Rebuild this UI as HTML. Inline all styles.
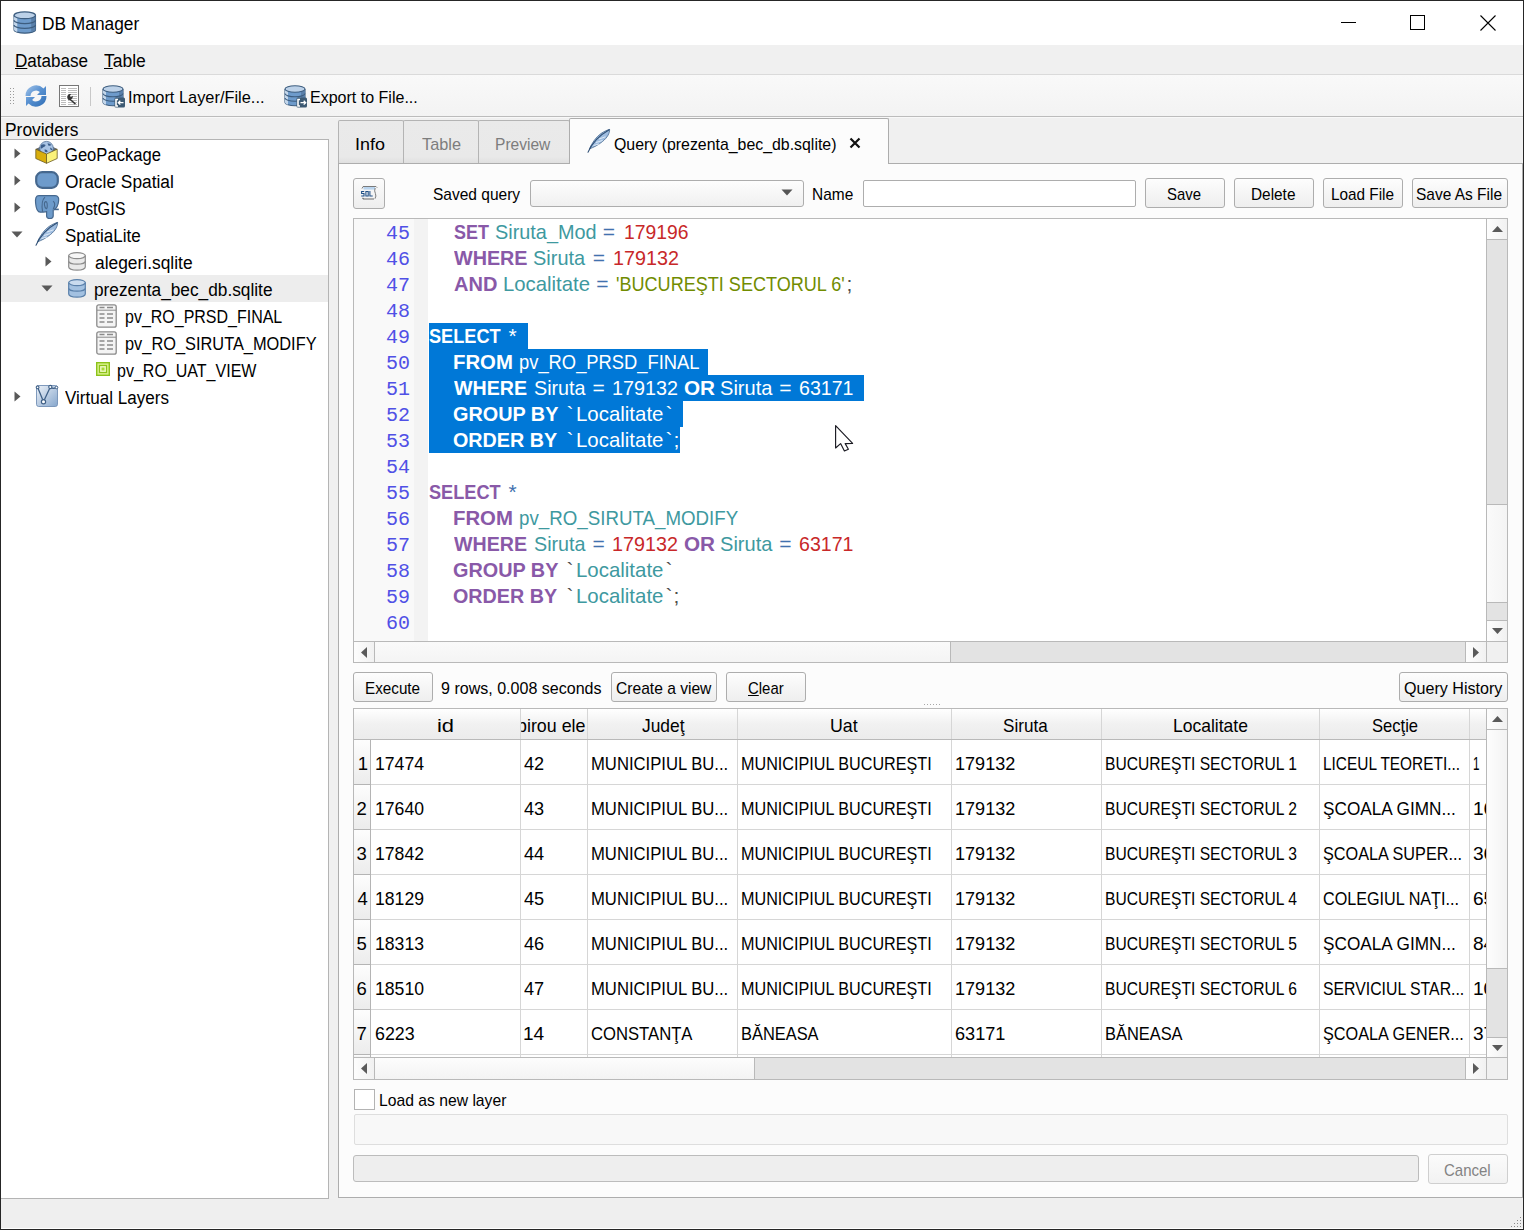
<!DOCTYPE html>
<html><head><meta charset="utf-8">
<style>
*{box-sizing:border-box;margin:0;padding:0}
html,body{width:1524px;height:1230px;overflow:hidden;background:#f0f0f0}
body{position:relative;font-family:"Liberation Sans",sans-serif;font-size:17px;color:#000}
.a{position:absolute}
.t{position:absolute;white-space:pre;line-height:1}
svg{position:absolute;overflow:visible}
.code{position:absolute;white-space:pre;line-height:1;font-size:20px}
.k{font-weight:bold;color:#8959a8}
.i{color:#3e999f}
.o{color:#4271ae}
.n{color:#c82829}
.s{color:#718c00}
.p{color:#4d4d4c}
.sel .k,.sel .i,.sel .o,.sel .n,.sel .s,.sel .p{color:#fff}
.ln{position:absolute;white-space:pre;line-height:1;font-family:"Liberation Mono",monospace;font-size:20px;color:#5050e6;text-align:right;width:60px}
</style></head><body>

<div class="a" style="left:0px;top:0px;width:1524px;height:1230px;background:#f0f0f0"></div>
<div class="a" style="left:1px;top:1px;width:1522px;height:44px;background:#fff"></div>
<div class="t" style="left:41.81px;top:16.00px;font-size:17.5px;transform-origin:0 0;transform:scaleX(0.9897);">DB Manager</div>
<div class="a" style="left:1341px;top:22px;width:15px;height:1px;background:#000"></div>
<div class="a" style="left:1410px;top:15px;width:15px;height:15px;border:1px solid #000"></div>
<svg style="left:1480px;top:15px" width="16" height="16" viewBox="0 0 16 16"><path d="M0.5 0.5 L15.5 15.5 M15.5 0.5 L0.5 15.5" stroke="#000" stroke-width="1.1"/></svg>
<div class="a" style="left:1px;top:45px;width:1522px;height:29px;background:#f0f0f0"></div>
<div class="t" style="left:14.70px;top:52.00px;font-size:18px;transform-origin:0 0;transform:scaleX(0.9481);"><u>D</u>atabase</div>
<div class="t" style="left:103.90px;top:52.00px;font-size:18px;transform-origin:0 0;transform:scaleX(0.9721);"><u>T</u>able</div>
<div class="a" style="left:1px;top:74px;width:1522px;height:1px;background:#dadada"></div>
<div class="a" style="left:1px;top:75px;width:1522px;height:41px;background:linear-gradient(#f9f9f9,#f3f3f3)"></div>
<div class="a" style="left:1px;top:116px;width:1522px;height:1px;background:#bcbcbc"></div>
<div class="a" style="left:1px;top:117px;width:1522px;height:1px;background:#f8f8f8"></div>
<div class="a" style="left:10px;top:88px;width:1px;height:1px;background:#9a9a9a"></div>
<div class="a" style="left:13px;top:88px;width:1px;height:1px;background:#9a9a9a"></div>
<div class="a" style="left:10px;top:91px;width:1px;height:1px;background:#9a9a9a"></div>
<div class="a" style="left:13px;top:91px;width:1px;height:1px;background:#9a9a9a"></div>
<div class="a" style="left:10px;top:94px;width:1px;height:1px;background:#9a9a9a"></div>
<div class="a" style="left:13px;top:94px;width:1px;height:1px;background:#9a9a9a"></div>
<div class="a" style="left:10px;top:97px;width:1px;height:1px;background:#9a9a9a"></div>
<div class="a" style="left:13px;top:97px;width:1px;height:1px;background:#9a9a9a"></div>
<div class="a" style="left:10px;top:100px;width:1px;height:1px;background:#9a9a9a"></div>
<div class="a" style="left:13px;top:100px;width:1px;height:1px;background:#9a9a9a"></div>
<div class="a" style="left:10px;top:103px;width:1px;height:1px;background:#9a9a9a"></div>
<div class="a" style="left:13px;top:103px;width:1px;height:1px;background:#9a9a9a"></div>
<svg style="left:0;top:0" width="60" height="120" viewBox="0 0 60 120">
<defs><linearGradient id="rfg" x1="25" y1="85" x2="46" y2="107" gradientUnits="userSpaceOnUse"><stop offset="0" stop-color="#a9c8ea"/><stop offset=".45" stop-color="#5b93d2"/><stop offset="1" stop-color="#2e6db5"/></linearGradient></defs>
<path d="M25.5 96 A10.5 10.5 0 0 1 43.5 88.5 L46 86 L46 95 L37 95 L39.9 92.1 A5.5 5.5 0 0 0 30.5 96 Z" fill="url(#rfg)"/>
<path d="M46.5 96 A10.5 10.5 0 0 1 28.5 103.5 L26 106 L26 97 L35 97 L32.1 99.9 A5.5 5.5 0 0 0 41.5 96 Z" fill="url(#rfg)"/>
</svg>
<svg style="left:59px;top:85px" width="20" height="22" viewBox="0 0 20 22">
<rect x="0.5" y="0.5" width="19" height="21" fill="#fff" stroke="#777" stroke-width="1"/>
<g stroke="#bdbdbd" stroke-width="1">
<path d="M2 3.5h5 M9 3.5h9 M2 5.5h5 M9 5.5h9 M2 7.5h5 M9 7.5h9 M2 9.5h5 M9 9.5h9 M2 11.5h5 M9 11.5h9 M2 13.5h5 M9 13.5h9 M2 15.5h5 M9 15.5h9 M2 17.5h5 M9 17.5h9 M2 19.5h5 M9 19.5h9"/>
</g>
<path d="M8.5 13.5 C7.5 11 9.5 8.5 12 9.2 L10.8 11 L12 12.2 L13.6 10.8 C14.2 12.6 13.2 14 12 14.2 L17 18.5 L15.8 19.6 L10.8 15 C9.8 15.2 9 14.6 8.5 13.5Z" fill="#333"/>
</svg>
<div class="a" style="left:90px;top:87px;width:1px;height:19px;background:#c8c8c8"></div>
<svg style="left:102px;top:85px" width="24" height="24" viewBox="0 0 24 24"><path d="M1 4 v13.5 a10 3.2 0 0 0 20 0 v-13.5" fill="#6e9bcb" stroke="#3d5d7f" stroke-width="1.1"/>
<path d="M1 4 v13.5 a10 3.2 0 0 0 3 2.2 v-13.5 a10 3.2 0 0 1 -3 -2.2z" fill="#c3d6ea"/>
<path d="M17 6 v13.5 a10 3.2 0 0 0 4 -2 v-13.5 a10 3.2 0 0 1 -4 2z" fill="#5a80aa"/>
<path d="M1 8.6 a10 3.2 0 0 0 20 0 M1 13 a10 3.2 0 0 0 20 0" fill="none" stroke="#3d5d7f" stroke-width="1.1"/>
<ellipse cx="11" cy="4" rx="10" ry="3.2" fill="#bcd1e8" stroke="#3d5d7f" stroke-width="1.1"/><rect x="12.5" y="12.5" width="10.5" height="10" rx="1.5" fill="#3d5a73"/><path d="M16 14.5 h-2 v6.5 h2" stroke="#fff" stroke-width="1.6" fill="none"/><path d="M21.5 17.7 h-5 M18.3 15.8 l-2 1.9 l2 1.9" stroke="#fff" stroke-width="1.3" fill="none"/></svg>
<div class="t" style="left:128.21px;top:90.00px;font-size:16.6px;transform-origin:0 0;transform:scaleX(0.9868);">Import Layer/File...</div>
<svg style="left:284px;top:85px" width="24" height="24" viewBox="0 0 24 24"><path d="M1 4 v13.5 a10 3.2 0 0 0 20 0 v-13.5" fill="#6e9bcb" stroke="#3d5d7f" stroke-width="1.1"/>
<path d="M1 4 v13.5 a10 3.2 0 0 0 3 2.2 v-13.5 a10 3.2 0 0 1 -3 -2.2z" fill="#c3d6ea"/>
<path d="M17 6 v13.5 a10 3.2 0 0 0 4 -2 v-13.5 a10 3.2 0 0 1 -4 2z" fill="#5a80aa"/>
<path d="M1 8.6 a10 3.2 0 0 0 20 0 M1 13 a10 3.2 0 0 0 20 0" fill="none" stroke="#3d5d7f" stroke-width="1.1"/>
<ellipse cx="11" cy="4" rx="10" ry="3.2" fill="#bcd1e8" stroke="#3d5d7f" stroke-width="1.1"/><rect x="12.5" y="12.5" width="10.5" height="10" rx="1.5" fill="#3d5a73"/><path d="M16 14.5 h-2 v6.5 h2" stroke="#fff" stroke-width="1.6" fill="none"/><path d="M16.5 17.7 h5 M19.7 15.8 l2 1.9 l-2 1.9" stroke="#fff" stroke-width="1.3" fill="none"/></svg>
<div class="t" style="left:310.23px;top:90.00px;font-size:16.6px;transform-origin:0 0;transform:scaleX(0.9655);">Export to File...</div>
<svg style="left:12.8px;top:10.8px" width="24" height="24" viewBox="0 0 24 24"><g transform="scale(1.07)"><path d="M1 4 v13.5 a10 3.2 0 0 0 20 0 v-13.5" fill="#6e9bcb" stroke="#3d5d7f" stroke-width="1.1"/>
<path d="M1 4 v13.5 a10 3.2 0 0 0 3 2.2 v-13.5 a10 3.2 0 0 1 -3 -2.2z" fill="#c3d6ea"/>
<path d="M17 6 v13.5 a10 3.2 0 0 0 4 -2 v-13.5 a10 3.2 0 0 1 -4 2z" fill="#5a80aa"/>
<path d="M1 8.6 a10 3.2 0 0 0 20 0 M1 13 a10 3.2 0 0 0 20 0" fill="none" stroke="#3d5d7f" stroke-width="1.1"/>
<ellipse cx="11" cy="4" rx="10" ry="3.2" fill="#bcd1e8" stroke="#3d5d7f" stroke-width="1.1"/></g></svg>
<div class="t" style="left:4.93px;top:121.00px;font-size:18px;transform-origin:0 0;transform:scaleX(0.9653);">Providers</div>
<div class="a" style="left:1px;top:139px;width:328px;height:1060px;background:#fff;border:1px solid #b4b4b4;border-left:none"></div>
<div class="a" style="left:1px;top:275px;width:327px;height:27px;background:#ededed"></div>
<svg style="left:14px;top:147.8px" width="7" height="11" viewBox="0 0 7 11"><path d="M0.5 0.5 L6.5 5.5 L0.5 10.5Z" fill="#595959"/></svg>
<svg style="left:35px;top:141px" width="23" height="23" viewBox="0 0 23 23">
<path d="M1 8.2 L11.5 3.5 L22 8.2 L11.5 13Z" fill="#5f6f7c" stroke="#555" stroke-width="0.7"/>
<circle cx="11.5" cy="7.2" r="6.8" fill="#a9c4e4" stroke="#506f95" stroke-width="0.8"/>
<path d="M6.2 3.8 q2.5 -1.2 4.5 0.3 q-0.5 2 -2.8 2.3 q-1 1.5 -2.4 0.8z M12.5 2.2 q2.5 0 4 1.8 q-1.5 1.2 -3.2 0.4z M9.5 8.5 q2.5 -0.5 3.3 2 q-1.5 1.5 -3 0z M15.2 6.5 q2 0.8 2.3 2.8 q-1.8 0.3 -2.3 -1.5z" fill="#3a5d8a"/>
<path d="M0.8 8.2 L11.5 13 L11.5 22.3 L0.8 17.5Z" fill="#d9ae0c" stroke="#6b5b1f" stroke-width="0.8" stroke-linejoin="round"/>
<path d="M22.2 8.2 L11.5 13 L11.5 22.3 L22.2 17.5Z" fill="#fbf27a" stroke="#6b5b1f" stroke-width="0.8" stroke-linejoin="round"/>
</svg>
<div class="t" style="left:64.58px;top:146.00px;font-size:18px;transform-origin:0 0;transform:scaleX(0.9214);">GeoPackage</div>
<svg style="left:14px;top:174.8px" width="7" height="11" viewBox="0 0 7 11"><path d="M0.5 0.5 L6.5 5.5 L0.5 10.5Z" fill="#595959"/></svg>
<svg style="left:35px;top:171px" width="24" height="18" viewBox="0 0 24 18"><rect x="1.2" y="1.2" width="21.6" height="15.6" rx="6" fill="#6e9bcb" stroke="#46688e" stroke-width="2.2"/></svg>
<div class="t" style="left:64.54px;top:173.00px;font-size:18px;transform-origin:0 0;transform:scaleX(0.9622);">Oracle Spatial</div>
<svg style="left:14px;top:201.8px" width="7" height="11" viewBox="0 0 7 11"><path d="M0.5 0.5 L6.5 5.5 L0.5 10.5Z" fill="#595959"/></svg>
<svg style="left:32px;top:192px" width="30" height="30" viewBox="0 0 30 30">
<path d="M7 3.6 H23 C26.3 3.6 27 6 26.6 9 C26.2 13 25 16 22 17.8 L21.2 18 L21.2 24 C21.2 27.3 14.6 27.3 14.6 24 L14.6 19.6 C12.5 20 10.5 20.2 8.3 20.2 C5 20.2 4 16 3.6 11 C3.2 6 4 3.6 7 3.6Z" fill="#6d9bcb" stroke="#46688e" stroke-width="1.2"/>
<path d="M10.6 19.8 C9.6 14 9.8 8 13 5.2" fill="none" stroke="#46688e" stroke-width="1.1"/>
<path d="M14.6 17 C12 15.5 11.8 10 13.6 9.6 C15.2 9.4 15.6 12.5 15 16.5" fill="none" stroke="#46688e" stroke-width="1.1"/>
<path d="M21.2 17 C23.3 14 23.2 10 21 9.2" fill="none" stroke="#46688e" stroke-width="1.1"/>
<path d="M22 17.4 H26.8" stroke="#46688e" stroke-width="1.6"/>
</svg>
<div class="t" style="left:64.60px;top:200.00px;font-size:18px;transform-origin:0 0;transform:scaleX(0.9030);">PostGIS</div>
<svg style="left:11px;top:231px" width="12" height="7" viewBox="0 0 12 7"><path d="M0.5 0.5 L11.5 0.5 L6 6.5Z" fill="#595959"/></svg>
<svg style="left:35px;top:222px" width="23" height="24" viewBox="0 0 23 24"><path d="M2.5 19.8 C5 14 9 8 14 4.5 C17 2.5 20 1 22.6 0.4 C22.8 4 20.5 8.5 15.5 12.5 C11.5 15.8 6.5 18.5 2.5 19.8 Z" fill="#9fbde0" stroke="#46688e" stroke-width="0.8"/>
<path d="M9 13.5 l6.5 -2 M12 10 l6.5 -2.2 M6.5 16.5 l5.5 -1.5" stroke="#e4eef8" stroke-width="0.9"/>
<path d="M0.8 23.6 C4 16 9 8 22.6 0.4" fill="none" stroke="#2f4f75" stroke-width="1.1"/></svg>
<div class="t" style="left:64.55px;top:227.00px;font-size:18px;transform-origin:0 0;transform:scaleX(0.9456);">SpatiaLite</div>
<svg style="left:45px;top:255.8px" width="7" height="11" viewBox="0 0 7 11"><path d="M0.5 0.5 L6.5 5.5 L0.5 10.5Z" fill="#595959"/></svg>
<svg style="left:68px;top:251.5px" width="18" height="19" viewBox="0 0 18 19">
<path d="M0.7 3.6 v11.5 a8.3 3 0 0 0 16.6 0 v-11.5" fill="#e9e9e9" stroke="#8c8c8c" stroke-width="1.2"/>
<path d="M0.7 9.2 a8.3 3 0 0 0 16.6 0" fill="none" stroke="#8c8c8c" stroke-width="1.2"/>
<ellipse cx="9" cy="3.6" rx="8.3" ry="3" fill="#f7f7f7" stroke="#8c8c8c" stroke-width="1.2"/></svg>
<div class="t" style="left:95.30px;top:254.00px;font-size:18px;transform-origin:0 0;transform:scaleX(0.9653);">alegeri.sqlite</div>
<svg style="left:41px;top:285px" width="12" height="7" viewBox="0 0 12 7"><path d="M0.5 0.5 L11.5 0.5 L6 6.5Z" fill="#595959"/></svg>
<svg style="left:68px;top:278.5px" width="18" height="19" viewBox="0 0 18 19">
<path d="M0.7 3.6 v11.5 a8.3 3 0 0 0 16.6 0 v-11.5" fill="#a3c1e1" stroke="#5a80aa" stroke-width="1.2"/>
<path d="M0.7 9.2 a8.3 3 0 0 0 16.6 0" fill="none" stroke="#5a80aa" stroke-width="1.2"/>
<ellipse cx="9" cy="3.6" rx="8.3" ry="3" fill="#c9dbef" stroke="#5a80aa" stroke-width="1.2"/></svg>
<div class="t" style="left:94.34px;top:281.00px;font-size:18px;transform-origin:0 0;transform:scaleX(0.9589);">prezenta_bec_db.sqlite</div>
<svg style="left:96px;top:303.5px" width="21" height="24" viewBox="0 0 21 24">
<rect x="0.8" y="0.8" width="19.4" height="22.4" rx="2" fill="#f4f4f4" stroke="#8a8a8a" stroke-width="1.3"/>
<path d="M1 6.2h19" stroke="#8a8a8a" stroke-width="1"/>
<path d="M3.5 3.5h5 M11 3.5h6 M3.5 10h5 M11 10h6 M3.5 14h5 M11 14h6 M3.5 18h5 M11 18h6" stroke="#8a8a8a" stroke-width="1.4"/>
</svg>
<div class="t" style="left:124.61px;top:308.00px;font-size:18px;transform-origin:0 0;transform:scaleX(0.8881);">pv_RO_PRSD_FINAL</div>
<svg style="left:96px;top:330.5px" width="21" height="24" viewBox="0 0 21 24">
<rect x="0.8" y="0.8" width="19.4" height="22.4" rx="2" fill="#f4f4f4" stroke="#8a8a8a" stroke-width="1.3"/>
<path d="M1 6.2h19" stroke="#8a8a8a" stroke-width="1"/>
<path d="M3.5 3.5h5 M11 3.5h6 M3.5 10h5 M11 10h6 M3.5 14h5 M11 14h6 M3.5 18h5 M11 18h6" stroke="#8a8a8a" stroke-width="1.4"/>
</svg>
<div class="t" style="left:124.59px;top:335.00px;font-size:18px;transform-origin:0 0;transform:scaleX(0.9091);">pv_RO_SIRUTA_MODIFY</div>
<svg style="left:96px;top:362px" width="14" height="14" viewBox="0 0 14 14">
<rect x="0.7" y="0.7" width="12.6" height="12.6" fill="#d8f08a" stroke="#8cc21a" stroke-width="1.4"/>
<rect x="3.5" y="3.5" width="7" height="7" fill="#f0fac8" stroke="#8cc21a" stroke-width="1.2"/>
<rect x="5.5" y="5.5" width="3" height="3" fill="#a8d838"/></svg>
<div class="t" style="left:116.81px;top:362.00px;font-size:18px;transform-origin:0 0;transform:scaleX(0.8897);">pv_RO_UAT_VIEW</div>
<svg style="left:14px;top:390.8px" width="7" height="11" viewBox="0 0 7 11"><path d="M0.5 0.5 L6.5 5.5 L0.5 10.5Z" fill="#595959"/></svg>
<svg style="left:36px;top:385px" width="22" height="22" viewBox="0 0 22 22">
<defs><linearGradient id="vlg" x1="0" y1="0" x2="1" y2="1"><stop offset="0" stop-color="#eef3f9"/><stop offset="1" stop-color="#86a6cc"/></linearGradient></defs>
<rect x="0.5" y="0.5" width="21" height="21" rx="2.2" fill="url(#vlg)" stroke="#7390b5" stroke-width="0.9"/>
<path d="M1.6 2.3 L7.5 16.7 L14.3 2 Q17 4.5 20.5 2.5" fill="none" stroke="#3e5f86" stroke-width="1.3"/>
<circle cx="7.5" cy="16.7" r="2.1" fill="#fff" stroke="#3e5f86" stroke-width="1.2"/>
<circle cx="14.3" cy="2" r="1.6" fill="#fff" stroke="#3e5f86" stroke-width="1.1"/>
<circle cx="1.6" cy="2.3" r="1.4" fill="#fff" stroke="#3e5f86" stroke-width="1.1"/>
<circle cx="20.5" cy="2.5" r="1.3" fill="#fff" stroke="#3e5f86" stroke-width="1"/>
</svg>
<div class="t" style="left:65.00px;top:389.00px;font-size:18px;transform-origin:0 0;transform:scaleX(0.9477);">Virtual Layers</div>
<div class="a" style="left:338px;top:163px;width:1185px;height:1035px;background:#fcfcfc;border:1px solid #adadad"></div>
<div class="a" style="left:338px;top:120px;width:66px;height:43px;background:linear-gradient(#eaeaea,#e9e9e9 85%,#e0e0e0);border:1px solid #b4b4b4;border-bottom:none;border-radius:2px 2px 0 0"></div>
<div class="a" style="left:403px;top:120px;width:76px;height:43px;background:linear-gradient(#eaeaea,#e9e9e9 85%,#e0e0e0);border:1px solid #b4b4b4;border-bottom:none;border-radius:2px 2px 0 0"></div>
<div class="a" style="left:478px;top:120px;width:92px;height:43px;background:linear-gradient(#eaeaea,#e9e9e9 85%,#e0e0e0);border:1px solid #b4b4b4;border-bottom:none;border-radius:2px 2px 0 0"></div>
<div class="a" style="left:569px;top:118px;width:320px;height:46px;background:#fcfcfc;border:1px solid #adadad;border-bottom:none;border-radius:2px 2px 0 0"></div>
<div class="t" style="left:355.14px;top:136.00px;font-size:17px;transform-origin:0 0;transform:scaleX(1.0556);">Info</div>
<div class="t" style="left:421.50px;top:136.00px;font-size:17px;transform-origin:0 0;transform:scaleX(0.9600);color:#7d7d7d">Table</div>
<div class="t" style="left:495.19px;top:136.00px;font-size:17px;transform-origin:0 0;transform:scaleX(0.9150);color:#7d7d7d">Preview</div>
<svg style="left:587px;top:129px" width="23" height="24" viewBox="0 0 23 24"><path d="M2.5 19.8 C5 14 9 8 14 4.5 C17 2.5 20 1 22.6 0.4 C22.8 4 20.5 8.5 15.5 12.5 C11.5 15.8 6.5 18.5 2.5 19.8 Z" fill="#9fbde0" stroke="#46688e" stroke-width="0.8"/>
<path d="M9 13.5 l6.5 -2 M12 10 l6.5 -2.2 M6.5 16.5 l5.5 -1.5" stroke="#e4eef8" stroke-width="0.9"/>
<path d="M0.8 23.6 C4 16 9 8 22.6 0.4" fill="none" stroke="#2f4f75" stroke-width="1.1"/></svg>
<div class="t" style="left:614.47px;top:136.00px;font-size:17px;transform-origin:0 0;transform:scaleX(0.9342);">Query (prezenta_bec_db.sqlite)</div>
<svg style="left:849px;top:137px" width="12" height="12" viewBox="0 0 12 12"><path d="M1.5 1.5 L10.5 10.5 M10.5 1.5 L1.5 10.5" stroke="#111" stroke-width="2.2"/></svg>
<div class="a" style="left:353px;top:178px;width:32px;height:31px;border:1px solid #adadad;border-radius:3px;background:linear-gradient(#fbfbfb,#eeeeee)"></div>
<svg style="left:350px;top:175px" width="40" height="37" viewBox="350 175 40 37">
<path d="M363 186.5 h13 l1.2 1.2 M362 188.5 l1.2 -2" fill="none" stroke="#7a7a7a" stroke-width="1"/>
<rect x="363.5" y="187" width="11.5" height="2.6" fill="#b9d4ee"/>
<path d="M375.2 188 q-1.2 3 0.2 5.5 q1.2 2.5 -0.4 5.2" fill="none" stroke="#6f6f6f" stroke-width="0.9"/>
<path d="M362.5 197.8 l1 1.2 h10.5" fill="none" stroke="#6a6a6a" stroke-width="1.2"/>
<g fill="none" stroke="#1f4f86" stroke-width="1.05">
<path d="M364.2 191.5 h-2.6 v2 h2.4 v2.5 h-2.8"/>
<path d="M365.9 191.5 h2.3 v4.5 h-2.3 z M367.5 195.5 l0.9 1"/>
<path d="M369.9 191 v5 h2.8"/>
</g></svg>
<div class="t" style="left:433.09px;top:186.00px;font-size:17px;transform-origin:0 0;transform:scaleX(0.9126);">Saved query</div>
<div class="a" style="left:530px;top:180px;width:274px;height:27px;border:1px solid #adadad;border-radius:3px;background:linear-gradient(#fdfdfd,#f0f0f0)"></div>
<svg style="left:781px;top:189px" width="12" height="7" viewBox="0 0 12 7"><path d="M0.5 0.5 L11.5 0.5 L6 6.5Z" fill="#555"/></svg>
<div class="t" style="left:812.49px;top:186.00px;font-size:17px;transform-origin:0 0;transform:scaleX(0.9091);">Name</div>
<div class="a" style="left:863px;top:180px;width:273px;height:27px;border:1px solid #adadad;border-radius:2px;background:#fff"></div>
<div class="a" style="left:1145px;top:178px;width:80px;height:30px;border:1px solid #adadad;border-radius:3px;background:linear-gradient(#fdfdfd,#eeeeee);"></div>
<div class="t" style="left:885.0px;width:600px;text-align:center;top:187.00px;font-size:16.9px;"></div>
<div class="t" style="left:1167.12px;top:186.00px;font-size:17px;transform-origin:0 0;transform:scaleX(0.8784);">Save</div>
<div class="a" style="left:1234px;top:178px;width:80px;height:30px;border:1px solid #adadad;border-radius:3px;background:linear-gradient(#fdfdfd,#eeeeee);"></div>
<div class="t" style="left:974.0px;width:600px;text-align:center;top:187.00px;font-size:16.9px;"></div>
<div class="t" style="left:1251.40px;top:186.00px;font-size:17px;transform-origin:0 0;transform:scaleX(0.9042);">Delete</div>
<div class="a" style="left:1323px;top:178px;width:80px;height:30px;border:1px solid #adadad;border-radius:3px;background:linear-gradient(#fdfdfd,#eeeeee);"></div>
<div class="t" style="left:1063.0px;width:600px;text-align:center;top:187.00px;font-size:16.9px;"></div>
<div class="t" style="left:1330.70px;top:186.00px;font-size:17px;transform-origin:0 0;transform:scaleX(0.9014);">Load File</div>
<div class="a" style="left:1412px;top:178px;width:96px;height:30px;border:1px solid #adadad;border-radius:3px;background:linear-gradient(#fdfdfd,#eeeeee);"></div>
<div class="t" style="left:1160.0px;width:600px;text-align:center;top:187.00px;font-size:16.9px;"></div>
<div class="t" style="left:1416.09px;top:186.00px;font-size:17px;transform-origin:0 0;transform:scaleX(0.9108);">Save As File</div>
<div class="a" style="left:353px;top:218px;width:1155px;height:445px;background:#fff;border:1px solid #b9b9b9"></div>
<div class="a" style="left:354px;top:219px;width:60px;height:422px;background:#f9f9f9"></div>
<div class="a" style="left:414px;top:219px;width:14px;height:422px;background:#f3f3f3"></div>
<div class="ln" style="left:350px;top:224.00px">45</div>
<div class="t" style="left:453.50px;top:221.00px;font-size:21px;transform-origin:0 0;transform:scaleX(0.8537);font-weight:bold;color:#8959a8">SET</div>
<div class="t" style="left:494.95px;top:221.00px;font-size:21px;transform-origin:0 0;transform:scaleX(0.9457);color:#3e999f">Siruta_Mod</div>
<div class="t" style="left:602.70px;top:221.00px;font-size:21px;transform-origin:0 0;transform:scaleX(1.0000);color:#4271ae">=</div>
<div class="t" style="left:623.88px;top:221.00px;font-size:21px;transform-origin:0 0;transform:scaleX(0.9203);color:#c82829">179196</div>
<div class="ln" style="left:350px;top:250.00px">46</div>
<div class="t" style="left:453.50px;top:247.00px;font-size:21px;transform-origin:0 0;transform:scaleX(0.9410);font-weight:bold;color:#8959a8">WHERE</div>
<div class="t" style="left:533.05px;top:247.00px;font-size:21px;transform-origin:0 0;transform:scaleX(0.9500);color:#3e999f">Siruta</div>
<div class="t" style="left:592.80px;top:247.00px;font-size:21px;transform-origin:0 0;transform:scaleX(1.0000);color:#4271ae">=</div>
<div class="t" style="left:612.56px;top:247.00px;font-size:21px;transform-origin:0 0;transform:scaleX(0.9406);color:#c82829">179132</div>
<div class="ln" style="left:350px;top:276.00px">47</div>
<div class="t" style="left:453.50px;top:273.00px;font-size:21px;transform-origin:0 0;transform:scaleX(0.9533);font-weight:bold;color:#8959a8">AND</div>
<div class="t" style="left:503.33px;top:273.00px;font-size:21px;transform-origin:0 0;transform:scaleX(0.9682);color:#3e999f">Localitate</div>
<div class="t" style="left:596.20px;top:273.00px;font-size:21px;transform-origin:0 0;transform:scaleX(1.0000);color:#4271ae">=</div>
<div class="t" style="left:615.54px;top:273.00px;font-size:21px;transform-origin:0 0;transform:scaleX(0.8602);color:#718c00">'BUCUREŞTI SECTORUL 6'</div>
<div class="t" style="left:846.50px;top:273.00px;font-size:21px;transform-origin:0 0;transform:scaleX(1.0000);color:#4d4d4c">;</div>
<div class="ln" style="left:350px;top:302.00px">48</div>
<div class="a" style="left:429px;top:323px;width:99px;height:26px;background:#0078d7"></div>
<div class="ln" style="left:350px;top:328.00px">49</div>
<div class="t" style="left:429.40px;top:325.00px;font-size:21px;transform-origin:0 0;transform:scaleX(0.8651);font-weight:bold;color:#fff">SELECT</div>
<div class="t" style="left:508.60px;top:325.00px;font-size:21px;transform-origin:0 0;transform:scaleX(1.0000);color:#fff">*</div>
<div class="a" style="left:429px;top:349px;width:279px;height:26px;background:#0078d7"></div>
<div class="ln" style="left:350px;top:354.00px">50</div>
<div class="t" style="left:453.03px;top:351.00px;font-size:21px;transform-origin:0 0;transform:scaleX(0.9683);font-weight:bold;color:#fff">FROM</div>
<div class="t" style="left:518.93px;top:351.00px;font-size:21px;transform-origin:0 0;transform:scaleX(0.8741);color:#fff">pv_RO_PRSD_FINAL</div>
<div class="a" style="left:429px;top:375px;width:435px;height:26px;background:#0078d7"></div>
<div class="ln" style="left:350px;top:380.00px">51</div>
<div class="t" style="left:454.00px;top:377.00px;font-size:21px;transform-origin:0 0;transform:scaleX(0.9346);font-weight:bold;color:#fff">WHERE</div>
<div class="t" style="left:533.66px;top:377.00px;font-size:21px;transform-origin:0 0;transform:scaleX(0.9389);color:#fff">Siruta</div>
<div class="t" style="left:592.60px;top:377.00px;font-size:21px;transform-origin:0 0;transform:scaleX(1.0000);color:#fff">=</div>
<div class="t" style="left:612.46px;top:377.00px;font-size:21px;transform-origin:0 0;transform:scaleX(0.9406);color:#fff">179132</div>
<div class="t" style="left:684.11px;top:377.00px;font-size:21px;transform-origin:0 0;transform:scaleX(0.9867);font-weight:bold;color:#fff">OR</div>
<div class="t" style="left:720.24px;top:377.00px;font-size:21px;transform-origin:0 0;transform:scaleX(0.9556);color:#fff">Siruta</div>
<div class="t" style="left:779.20px;top:377.00px;font-size:21px;transform-origin:0 0;transform:scaleX(1.0000);color:#fff">=</div>
<div class="t" style="left:799.37px;top:377.00px;font-size:21px;transform-origin:0 0;transform:scaleX(0.9316);color:#fff">63171</div>
<div class="a" style="left:429px;top:401px;width:254px;height:26px;background:#0078d7"></div>
<div class="ln" style="left:350px;top:406.00px">52</div>
<div class="t" style="left:453.06px;top:403.00px;font-size:21px;transform-origin:0 0;transform:scaleX(0.9441);font-weight:bold;color:#fff">GROUP BY</div>
<div class="t" style="left:566.60px;top:403.00px;font-size:21px;transform-origin:0 0;transform:scaleX(1.0000);color:#fff">`</div>
<div class="t" style="left:575.53px;top:403.00px;font-size:21px;transform-origin:0 0;transform:scaleX(0.9727);color:#fff">Localitate</div>
<div class="t" style="left:665.50px;top:403.00px;font-size:21px;transform-origin:0 0;transform:scaleX(1.0000);color:#fff">`</div>
<div class="a" style="left:429px;top:427px;width:251px;height:26px;background:#0078d7"></div>
<div class="ln" style="left:350px;top:432.00px">53</div>
<div class="t" style="left:453.06px;top:429.00px;font-size:21px;transform-origin:0 0;transform:scaleX(0.9391);font-weight:bold;color:#fff">ORDER BY</div>
<div class="t" style="left:566.60px;top:429.00px;font-size:21px;transform-origin:0 0;transform:scaleX(1.0000);color:#fff">`</div>
<div class="t" style="left:575.53px;top:429.00px;font-size:21px;transform-origin:0 0;transform:scaleX(0.9727);color:#fff">Localitate</div>
<div class="t" style="left:665.50px;top:429.00px;font-size:21px;transform-origin:0 0;transform:scaleX(1.0000);color:#fff">`</div>
<div class="t" style="left:673.40px;top:429.00px;font-size:21px;transform-origin:0 0;transform:scaleX(1.0000);color:#fff">;</div>
<div class="ln" style="left:350px;top:458.00px">54</div>
<div class="ln" style="left:350px;top:484.00px">55</div>
<div class="t" style="left:429.40px;top:481.00px;font-size:21px;transform-origin:0 0;transform:scaleX(0.8651);font-weight:bold;color:#8959a8">SELECT</div>
<div class="t" style="left:508.60px;top:481.00px;font-size:21px;transform-origin:0 0;transform:scaleX(1.0000);color:#4271ae">*</div>
<div class="ln" style="left:350px;top:510.00px">56</div>
<div class="t" style="left:453.03px;top:507.00px;font-size:21px;transform-origin:0 0;transform:scaleX(0.9683);font-weight:bold;color:#8959a8">FROM</div>
<div class="t" style="left:518.91px;top:507.00px;font-size:21px;transform-origin:0 0;transform:scaleX(0.8918);color:#3e999f">pv_RO_SIRUTA_MODIFY</div>
<div class="ln" style="left:350px;top:536.00px">57</div>
<div class="t" style="left:454.00px;top:533.00px;font-size:21px;transform-origin:0 0;transform:scaleX(0.9346);font-weight:bold;color:#8959a8">WHERE</div>
<div class="t" style="left:533.66px;top:533.00px;font-size:21px;transform-origin:0 0;transform:scaleX(0.9389);color:#3e999f">Siruta</div>
<div class="t" style="left:592.60px;top:533.00px;font-size:21px;transform-origin:0 0;transform:scaleX(1.0000);color:#4271ae">=</div>
<div class="t" style="left:612.46px;top:533.00px;font-size:21px;transform-origin:0 0;transform:scaleX(0.9406);color:#c82829">179132</div>
<div class="t" style="left:684.11px;top:533.00px;font-size:21px;transform-origin:0 0;transform:scaleX(0.9867);font-weight:bold;color:#8959a8">OR</div>
<div class="t" style="left:720.24px;top:533.00px;font-size:21px;transform-origin:0 0;transform:scaleX(0.9556);color:#3e999f">Siruta</div>
<div class="t" style="left:779.20px;top:533.00px;font-size:21px;transform-origin:0 0;transform:scaleX(1.0000);color:#4271ae">=</div>
<div class="t" style="left:799.37px;top:533.00px;font-size:21px;transform-origin:0 0;transform:scaleX(0.9316);color:#c82829">63171</div>
<div class="ln" style="left:350px;top:562.00px">58</div>
<div class="t" style="left:453.06px;top:559.00px;font-size:21px;transform-origin:0 0;transform:scaleX(0.9441);font-weight:bold;color:#8959a8">GROUP BY</div>
<div class="t" style="left:566.60px;top:559.00px;font-size:21px;transform-origin:0 0;transform:scaleX(1.0000);color:#4d4d4c">`</div>
<div class="t" style="left:575.53px;top:559.00px;font-size:21px;transform-origin:0 0;transform:scaleX(0.9727);color:#3e999f">Localitate</div>
<div class="t" style="left:665.50px;top:559.00px;font-size:21px;transform-origin:0 0;transform:scaleX(1.0000);color:#4d4d4c">`</div>
<div class="ln" style="left:350px;top:588.00px">59</div>
<div class="t" style="left:453.06px;top:585.00px;font-size:21px;transform-origin:0 0;transform:scaleX(0.9391);font-weight:bold;color:#8959a8">ORDER BY</div>
<div class="t" style="left:566.60px;top:585.00px;font-size:21px;transform-origin:0 0;transform:scaleX(1.0000);color:#4d4d4c">`</div>
<div class="t" style="left:575.53px;top:585.00px;font-size:21px;transform-origin:0 0;transform:scaleX(0.9727);color:#3e999f">Localitate</div>
<div class="t" style="left:665.50px;top:585.00px;font-size:21px;transform-origin:0 0;transform:scaleX(1.0000);color:#4d4d4c">`</div>
<div class="t" style="left:673.40px;top:585.00px;font-size:21px;transform-origin:0 0;transform:scaleX(1.0000);color:#4d4d4c">;</div>
<div class="ln" style="left:350px;top:614.00px">60</div>
<svg style="left:820px;top:415px" width="40" height="45" viewBox="820 415 40 45">
<path d="M835.6 425.6 L835.6 448 L840.6 443.6 L844.4 451 L848.4 449.2 L845.2 443.6 L852.6 443.4 Z" fill="#fff" stroke="#1a1a22" stroke-width="1.15" stroke-linejoin="round"/></svg>
<div class="a" style="left:1486px;top:218px;width:22px;height:424px;background:linear-gradient(90deg,#fafafa,#f4f4f4);border:1px solid #b9b9b9"></div>
<div class="a" style="left:1486px;top:218px;width:22px;height:22px;background:linear-gradient(90deg,#fdfdfd,#f1f1f1);border:1px solid #b9b9b9"></div>
<svg style="left:1491.5px;top:226.0px" width="11" height="6" viewBox="0 0 11 6"><path d="M0 6 L5.5 0 L11 6Z" fill="#5a5a5a"/></svg>
<div class="a" style="left:1486px;top:239px;width:22px;height:266px;background:#e3e3e3;border:1px solid #b9b9b9"></div>
<div class="a" style="left:1486px;top:602px;width:22px;height:19px;background:#e3e3e3;border:1px solid #b9b9b9"></div>
<div class="a" style="left:1486px;top:620px;width:22px;height:22px;background:linear-gradient(90deg,#fdfdfd,#f1f1f1);border:1px solid #b9b9b9"></div>
<svg style="left:1491.5px;top:628.0px" width="11" height="6" viewBox="0 0 11 6"><path d="M0 0 L5.5 6 L11 0Z" fill="#5a5a5a"/></svg>
<div class="a" style="left:353px;top:641px;width:1134px;height:22px;background:linear-gradient(#fafafa,#f4f4f4);border:1px solid #b9b9b9"></div>
<div class="a" style="left:353px;top:641px;width:22px;height:22px;background:linear-gradient(90deg,#fdfdfd,#f1f1f1);border:1px solid #b9b9b9"></div>
<svg style="left:361.0px;top:646.5px" width="6" height="11" viewBox="0 0 6 11"><path d="M6 0 L0 5.5 L6 11Z" fill="#5a5a5a"/></svg>
<div class="a" style="left:950px;top:641px;width:516px;height:22px;background:#e3e3e3;border:1px solid #b9b9b9"></div>
<div class="a" style="left:1465px;top:641px;width:22px;height:22px;background:linear-gradient(90deg,#fdfdfd,#f1f1f1);border:1px solid #b9b9b9"></div>
<svg style="left:1473.0px;top:646.5px" width="6" height="11" viewBox="0 0 6 11"><path d="M0 0 L6 5.5 L0 11Z" fill="#5a5a5a"/></svg>
<div class="a" style="left:1486px;top:641px;width:22px;height:22px;background:#f0f0f0;border:1px solid #b9b9b9"></div>
<div class="a" style="left:353px;top:672px;width:80px;height:30px;border:1px solid #adadad;border-radius:3px;background:linear-gradient(#fdfdfd,#eeeeee);"></div>
<div class="t" style="left:93.0px;width:600px;text-align:center;top:680.00px;font-size:16.9px;"></div>
<div class="t" style="left:365.10px;top:680.00px;font-size:17px;transform-origin:0 0;transform:scaleX(0.8967);">Execute</div>
<div class="t" style="left:441.06px;top:680.00px;font-size:17px;transform-origin:0 0;transform:scaleX(0.9438);">9 rows, 0.008 seconds</div>
<div class="a" style="left:611px;top:672px;width:106px;height:30px;border:1px solid #adadad;border-radius:3px;background:linear-gradient(#fdfdfd,#eeeeee);"></div>
<div class="t" style="left:364.0px;width:600px;text-align:center;top:680.00px;font-size:16.9px;"></div>
<div class="t" style="left:615.58px;top:680.00px;font-size:17px;transform-origin:0 0;transform:scaleX(0.9175);">Create a view</div>
<div class="a" style="left:726px;top:672px;width:80px;height:30px;border:1px solid #adadad;border-radius:3px;background:linear-gradient(#fdfdfd,#eeeeee);"></div>
<div class="t" style="left:466.0px;width:600px;text-align:center;top:680.00px;font-size:16.9px;"></div>
<div class="t" style="left:748.00px;top:680.00px;font-size:17px;transform-origin:0 0;transform:scaleX(0.8780);"><u>C</u>lear</div>
<div class="a" style="left:1399px;top:672px;width:109px;height:30px;border:1px solid #adadad;border-radius:3px;background:linear-gradient(#fdfdfd,#eeeeee);"></div>
<div class="t" style="left:1153.5px;width:600px;text-align:center;top:680.00px;font-size:16.9px;"></div>
<div class="t" style="left:1403.55px;top:680.00px;font-size:17px;transform-origin:0 0;transform:scaleX(0.9466);">Query History</div>
<div class="a" style="left:924px;top:704px;width:1px;height:1px;background:#a8a8a8"></div>
<div class="a" style="left:927px;top:704px;width:1px;height:1px;background:#a8a8a8"></div>
<div class="a" style="left:930px;top:704px;width:1px;height:1px;background:#a8a8a8"></div>
<div class="a" style="left:933px;top:704px;width:1px;height:1px;background:#a8a8a8"></div>
<div class="a" style="left:936px;top:704px;width:1px;height:1px;background:#a8a8a8"></div>
<div class="a" style="left:939px;top:704px;width:1px;height:1px;background:#a8a8a8"></div>
<div class="a" style="left:353px;top:708px;width:1155px;height:372px;background:#fff;border:1px solid #b9b9b9"></div>
<div class="a" style="left:354px;top:709px;width:1132px;height:30px;background:linear-gradient(#ffffff,#f1f1f1 50%,#ececec)"></div>
<div class="a" style="left:354px;top:739px;width:1132px;height:1px;background:#b9b9b9"></div>
<div class="a" style="left:520px;top:709px;width:1px;height:30px;background:#d6d6d6"></div>
<div class="a" style="left:587px;top:709px;width:1px;height:30px;background:#d6d6d6"></div>
<div class="a" style="left:737px;top:709px;width:1px;height:30px;background:#d6d6d6"></div>
<div class="a" style="left:951px;top:709px;width:1px;height:30px;background:#d6d6d6"></div>
<div class="a" style="left:1101px;top:709px;width:1px;height:30px;background:#d6d6d6"></div>
<div class="a" style="left:1319px;top:709px;width:1px;height:30px;background:#d6d6d6"></div>
<div class="a" style="left:1469px;top:709px;width:1px;height:30px;background:#d6d6d6"></div>
<div class="a" style="left:354px;top:740px;width:16px;height:44px;background:linear-gradient(#fdfdfd,#ececec)"></div>
<div class="a" style="left:354px;top:785px;width:16px;height:44px;background:linear-gradient(#fdfdfd,#ececec)"></div>
<div class="a" style="left:354px;top:830px;width:16px;height:44px;background:linear-gradient(#fdfdfd,#ececec)"></div>
<div class="a" style="left:354px;top:875px;width:16px;height:44px;background:linear-gradient(#fdfdfd,#ececec)"></div>
<div class="a" style="left:354px;top:920px;width:16px;height:44px;background:linear-gradient(#fdfdfd,#ececec)"></div>
<div class="a" style="left:354px;top:965px;width:16px;height:44px;background:linear-gradient(#fdfdfd,#ececec)"></div>
<div class="a" style="left:354px;top:1010px;width:16px;height:44px;background:linear-gradient(#fdfdfd,#ececec)"></div>
<div class="a" style="left:354px;top:1055px;width:16px;height:3px;background:linear-gradient(#fdfdfd,#ececec)"></div>
<div class="a" style="left:370px;top:740px;width:1px;height:318px;background:#b4b4b4"></div>
<div class="a" style="left:354px;top:784px;width:16px;height:1px;background:#b4b4b4"></div>
<div class="a" style="left:371px;top:784px;width:1115px;height:1px;background:#d6d6d6"></div>
<div class="a" style="left:354px;top:829px;width:16px;height:1px;background:#b4b4b4"></div>
<div class="a" style="left:371px;top:829px;width:1115px;height:1px;background:#d6d6d6"></div>
<div class="a" style="left:354px;top:874px;width:16px;height:1px;background:#b4b4b4"></div>
<div class="a" style="left:371px;top:874px;width:1115px;height:1px;background:#d6d6d6"></div>
<div class="a" style="left:354px;top:919px;width:16px;height:1px;background:#b4b4b4"></div>
<div class="a" style="left:371px;top:919px;width:1115px;height:1px;background:#d6d6d6"></div>
<div class="a" style="left:354px;top:964px;width:16px;height:1px;background:#b4b4b4"></div>
<div class="a" style="left:371px;top:964px;width:1115px;height:1px;background:#d6d6d6"></div>
<div class="a" style="left:354px;top:1009px;width:16px;height:1px;background:#b4b4b4"></div>
<div class="a" style="left:371px;top:1009px;width:1115px;height:1px;background:#d6d6d6"></div>
<div class="a" style="left:354px;top:1054px;width:16px;height:1px;background:#b4b4b4"></div>
<div class="a" style="left:371px;top:1054px;width:1115px;height:1px;background:#d6d6d6"></div>
<div class="a" style="left:520px;top:740px;width:1px;height:318px;background:#d6d6d6"></div>
<div class="a" style="left:587px;top:740px;width:1px;height:318px;background:#d6d6d6"></div>
<div class="a" style="left:737px;top:740px;width:1px;height:318px;background:#d6d6d6"></div>
<div class="a" style="left:951px;top:740px;width:1px;height:318px;background:#d6d6d6"></div>
<div class="a" style="left:1101px;top:740px;width:1px;height:318px;background:#d6d6d6"></div>
<div class="a" style="left:1319px;top:740px;width:1px;height:318px;background:#d6d6d6"></div>
<div class="a" style="left:1469px;top:740px;width:1px;height:318px;background:#d6d6d6"></div>
<div class="t" style="left:436.72px;top:717.00px;font-size:18.5px;transform-origin:0 0;transform:scaleX(1.1833);">id</div>
<div class="a" style="left:521px;top:709px;width:66px;height:30px;overflow:hidden">
<div class="t" style="left:-4.16px;top:8.00px;font-size:18.5px;transform-origin:0 0;transform:scaleX(0.9643);">birou ele</div>
</div>
<div class="t" style="left:641.60px;top:717.00px;font-size:18.5px;transform-origin:0 0;transform:scaleX(0.9400);">Judeţ</div>
<div class="t" style="left:830.24px;top:717.00px;font-size:18.5px;transform-origin:0 0;transform:scaleX(0.9607);">Uat</div>
<div class="t" style="left:1003.08px;top:717.00px;font-size:18.5px;transform-origin:0 0;transform:scaleX(0.9250);">Siruta</div>
<div class="t" style="left:1173.05px;top:717.00px;font-size:18.5px;transform-origin:0 0;transform:scaleX(0.9462);">Localitate</div>
<div class="t" style="left:1371.80px;top:717.00px;font-size:18.5px;transform-origin:0 0;transform:scaleX(0.8960);">Secţie</div>
<div class="t" style="left:357.80px;top:755.00px;font-size:18.5px;transform-origin:0 0;transform:scaleX(1.0000);">1</div>
<div class="t" style="left:374.95px;top:755.00px;font-size:18.5px;transform-origin:0 0;transform:scaleX(0.9520);">17474</div>
<div class="t" style="left:523.90px;top:755.00px;font-size:18.5px;transform-origin:0 0;transform:scaleX(0.9800);">42</div>
<div class="t" style="left:591.10px;top:755.00px;font-size:18.5px;transform-origin:0 0;transform:scaleX(0.9000);">MUNICIPIUL BU...</div>
<div class="t" style="left:741.13px;top:755.00px;font-size:18.5px;transform-origin:0 0;transform:scaleX(0.8736);">MUNICIPIUL BUCUREŞTI</div>
<div class="t" style="left:954.72px;top:755.00px;font-size:18.5px;transform-origin:0 0;transform:scaleX(0.9767);">179132</div>
<div class="t" style="left:1104.65px;top:755.00px;font-size:18.5px;transform-origin:0 0;transform:scaleX(0.8451);">BUCUREŞTI SECTORUL 1</div>
<div class="t" style="left:1322.97px;top:755.00px;font-size:18.5px;transform-origin:0 0;transform:scaleX(0.8333);">LICEUL TEORETI...</div>
<div class="t" style="left:1473.37px;top:755.00px;font-size:18.5px;transform-origin:0 0;transform:scaleX(0.6333);">1</div>
<div class="t" style="left:356.50px;top:800.00px;font-size:18.5px;transform-origin:0 0;transform:scaleX(1.0000);">2</div>
<div class="t" style="left:374.95px;top:800.00px;font-size:18.5px;transform-origin:0 0;transform:scaleX(0.9520);">17640</div>
<div class="t" style="left:523.90px;top:800.00px;font-size:18.5px;transform-origin:0 0;transform:scaleX(0.9800);">43</div>
<div class="t" style="left:591.10px;top:800.00px;font-size:18.5px;transform-origin:0 0;transform:scaleX(0.9000);">MUNICIPIUL BU...</div>
<div class="t" style="left:741.13px;top:800.00px;font-size:18.5px;transform-origin:0 0;transform:scaleX(0.8736);">MUNICIPIUL BUCUREŞTI</div>
<div class="t" style="left:954.72px;top:800.00px;font-size:18.5px;transform-origin:0 0;transform:scaleX(0.9767);">179132</div>
<div class="t" style="left:1104.65px;top:800.00px;font-size:18.5px;transform-origin:0 0;transform:scaleX(0.8451);">BUCUREŞTI SECTORUL 2</div>
<div class="t" style="left:1322.87px;top:800.00px;font-size:18.5px;transform-origin:0 0;transform:scaleX(0.9291);">ŞCOALA GIMN...</div>
<div class="t" style="left:1472.97px;top:800.00px;font-size:18.5px;transform-origin:0 0;transform:scaleX(1.0316);">16</div>
<div class="t" style="left:356.50px;top:845.00px;font-size:18.5px;transform-origin:0 0;transform:scaleX(1.0000);">3</div>
<div class="t" style="left:374.95px;top:845.00px;font-size:18.5px;transform-origin:0 0;transform:scaleX(0.9520);">17842</div>
<div class="t" style="left:523.90px;top:845.00px;font-size:18.5px;transform-origin:0 0;transform:scaleX(0.9800);">44</div>
<div class="t" style="left:591.10px;top:845.00px;font-size:18.5px;transform-origin:0 0;transform:scaleX(0.9000);">MUNICIPIUL BU...</div>
<div class="t" style="left:741.13px;top:845.00px;font-size:18.5px;transform-origin:0 0;transform:scaleX(0.8736);">MUNICIPIUL BUCUREŞTI</div>
<div class="t" style="left:954.72px;top:845.00px;font-size:18.5px;transform-origin:0 0;transform:scaleX(0.9767);">179132</div>
<div class="t" style="left:1104.65px;top:845.00px;font-size:18.5px;transform-origin:0 0;transform:scaleX(0.8451);">BUCUREŞTI SECTORUL 3</div>
<div class="t" style="left:1322.92px;top:845.00px;font-size:18.5px;transform-origin:0 0;transform:scaleX(0.8782);">ŞCOALA SUPER...</div>
<div class="t" style="left:1472.97px;top:845.00px;font-size:18.5px;transform-origin:0 0;transform:scaleX(1.0316);">36</div>
<div class="t" style="left:357.50px;top:890.00px;font-size:18.5px;transform-origin:0 0;transform:scaleX(1.0000);">4</div>
<div class="t" style="left:374.95px;top:890.00px;font-size:18.5px;transform-origin:0 0;transform:scaleX(0.9520);">18129</div>
<div class="t" style="left:523.90px;top:890.00px;font-size:18.5px;transform-origin:0 0;transform:scaleX(0.9800);">45</div>
<div class="t" style="left:591.10px;top:890.00px;font-size:18.5px;transform-origin:0 0;transform:scaleX(0.9000);">MUNICIPIUL BU...</div>
<div class="t" style="left:741.13px;top:890.00px;font-size:18.5px;transform-origin:0 0;transform:scaleX(0.8736);">MUNICIPIUL BUCUREŞTI</div>
<div class="t" style="left:954.72px;top:890.00px;font-size:18.5px;transform-origin:0 0;transform:scaleX(0.9767);">179132</div>
<div class="t" style="left:1104.65px;top:890.00px;font-size:18.5px;transform-origin:0 0;transform:scaleX(0.8451);">BUCUREŞTI SECTORUL 4</div>
<div class="t" style="left:1322.93px;top:890.00px;font-size:18.5px;transform-origin:0 0;transform:scaleX(0.8739);">COLEGIUL NAŢI...</div>
<div class="t" style="left:1472.97px;top:890.00px;font-size:18.5px;transform-origin:0 0;transform:scaleX(1.0316);">65</div>
<div class="t" style="left:356.50px;top:935.00px;font-size:18.5px;transform-origin:0 0;transform:scaleX(1.0000);">5</div>
<div class="t" style="left:374.95px;top:935.00px;font-size:18.5px;transform-origin:0 0;transform:scaleX(0.9520);">18313</div>
<div class="t" style="left:523.90px;top:935.00px;font-size:18.5px;transform-origin:0 0;transform:scaleX(0.9800);">46</div>
<div class="t" style="left:591.10px;top:935.00px;font-size:18.5px;transform-origin:0 0;transform:scaleX(0.9000);">MUNICIPIUL BU...</div>
<div class="t" style="left:741.13px;top:935.00px;font-size:18.5px;transform-origin:0 0;transform:scaleX(0.8736);">MUNICIPIUL BUCUREŞTI</div>
<div class="t" style="left:954.72px;top:935.00px;font-size:18.5px;transform-origin:0 0;transform:scaleX(0.9767);">179132</div>
<div class="t" style="left:1104.65px;top:935.00px;font-size:18.5px;transform-origin:0 0;transform:scaleX(0.8451);">BUCUREŞTI SECTORUL 5</div>
<div class="t" style="left:1322.87px;top:935.00px;font-size:18.5px;transform-origin:0 0;transform:scaleX(0.9291);">ŞCOALA GIMN...</div>
<div class="t" style="left:1472.97px;top:935.00px;font-size:18.5px;transform-origin:0 0;transform:scaleX(1.0316);">84</div>
<div class="t" style="left:356.50px;top:980.00px;font-size:18.5px;transform-origin:0 0;transform:scaleX(1.0000);">6</div>
<div class="t" style="left:374.95px;top:980.00px;font-size:18.5px;transform-origin:0 0;transform:scaleX(0.9520);">18510</div>
<div class="t" style="left:523.90px;top:980.00px;font-size:18.5px;transform-origin:0 0;transform:scaleX(0.9800);">47</div>
<div class="t" style="left:591.10px;top:980.00px;font-size:18.5px;transform-origin:0 0;transform:scaleX(0.9000);">MUNICIPIUL BU...</div>
<div class="t" style="left:741.13px;top:980.00px;font-size:18.5px;transform-origin:0 0;transform:scaleX(0.8736);">MUNICIPIUL BUCUREŞTI</div>
<div class="t" style="left:954.72px;top:980.00px;font-size:18.5px;transform-origin:0 0;transform:scaleX(0.9767);">179132</div>
<div class="t" style="left:1104.65px;top:980.00px;font-size:18.5px;transform-origin:0 0;transform:scaleX(0.8451);">BUCUREŞTI SECTORUL 6</div>
<div class="t" style="left:1322.94px;top:980.00px;font-size:18.5px;transform-origin:0 0;transform:scaleX(0.8552);">SERVICIUL STAR...</div>
<div class="t" style="left:1472.97px;top:980.00px;font-size:18.5px;transform-origin:0 0;transform:scaleX(1.0316);">10</div>
<div class="t" style="left:356.50px;top:1025.00px;font-size:18.5px;transform-origin:0 0;transform:scaleX(1.0000);">7</div>
<div class="t" style="left:374.94px;top:1025.00px;font-size:18.5px;transform-origin:0 0;transform:scaleX(0.9650);">6223</div>
<div class="t" style="left:522.87px;top:1025.00px;font-size:18.5px;transform-origin:0 0;transform:scaleX(1.0316);">14</div>
<div class="t" style="left:591.10px;top:1025.00px;font-size:18.5px;transform-origin:0 0;transform:scaleX(0.9000);">CONSTANŢA</div>
<div class="t" style="left:741.11px;top:1025.00px;font-size:18.5px;transform-origin:0 0;transform:scaleX(0.8874);">BĂNEASA</div>
<div class="t" style="left:954.72px;top:1025.00px;font-size:18.5px;transform-origin:0 0;transform:scaleX(0.9800);">63171</div>
<div class="t" style="left:1104.61px;top:1025.00px;font-size:18.5px;transform-origin:0 0;transform:scaleX(0.8874);">BĂNEASA</div>
<div class="t" style="left:1322.92px;top:1025.00px;font-size:18.5px;transform-origin:0 0;transform:scaleX(0.8778);">ŞCOALA GENER...</div>
<div class="t" style="left:1472.97px;top:1025.00px;font-size:18.5px;transform-origin:0 0;transform:scaleX(1.0316);">37</div>
<div class="a" style="left:1486px;top:708px;width:22px;height:350px;background:linear-gradient(90deg,#fdfdfd,#f3f3f3);border:1px solid #b9b9b9"></div>
<div class="a" style="left:1486px;top:708px;width:22px;height:22px;background:linear-gradient(90deg,#fdfdfd,#f1f1f1);border:1px solid #b9b9b9"></div>
<svg style="left:1491.5px;top:716.0px" width="11" height="6" viewBox="0 0 11 6"><path d="M0 6 L5.5 0 L11 6Z" fill="#5a5a5a"/></svg>
<div class="a" style="left:1486px;top:968px;width:22px;height:70px;background:#e3e3e3;border:1px solid #b9b9b9"></div>
<div class="a" style="left:1486px;top:1037px;width:22px;height:21px;background:linear-gradient(90deg,#fdfdfd,#f1f1f1);border:1px solid #b9b9b9"></div>
<svg style="left:1491.5px;top:1044.5px" width="11" height="6" viewBox="0 0 11 6"><path d="M0 0 L5.5 6 L11 0Z" fill="#5a5a5a"/></svg>
<div class="a" style="left:353px;top:1057px;width:1134px;height:23px;background:linear-gradient(#fdfdfd,#f3f3f3);border:1px solid #b9b9b9"></div>
<div class="a" style="left:353px;top:1057px;width:22px;height:23px;background:linear-gradient(90deg,#fdfdfd,#f1f1f1);border:1px solid #b9b9b9"></div>
<svg style="left:361.0px;top:1063.0px" width="6" height="11" viewBox="0 0 6 11"><path d="M6 0 L0 5.5 L6 11Z" fill="#5a5a5a"/></svg>
<div class="a" style="left:754px;top:1057px;width:712px;height:23px;background:#e3e3e3;border:1px solid #b9b9b9"></div>
<div class="a" style="left:1465px;top:1057px;width:22px;height:23px;background:linear-gradient(90deg,#fdfdfd,#f1f1f1);border:1px solid #b9b9b9"></div>
<svg style="left:1473.0px;top:1063.0px" width="6" height="11" viewBox="0 0 6 11"><path d="M0 0 L6 5.5 L0 11Z" fill="#5a5a5a"/></svg>
<div class="a" style="left:1486px;top:1057px;width:22px;height:23px;background:#f0f0f0;border:1px solid #b9b9b9"></div>
<div class="a" style="left:354px;top:1089px;width:21px;height:21px;background:#fff;border:1px solid #b3b3b3"></div>
<div class="t" style="left:378.58px;top:1092.00px;font-size:17px;transform-origin:0 0;transform:scaleX(0.9234);">Load as new layer</div>
<div class="a" style="left:354px;top:1114px;width:1154px;height:31px;background:#f8f8f8;border:1px solid #dedede;border-radius:2px"></div>
<div class="a" style="left:353px;top:1155px;width:1066px;height:27px;background:#eeeeee;border:1px solid #bcbcbc;border-radius:3px"></div>
<div class="a" style="left:1428px;top:1154px;width:80px;height:30px;border:1px solid #adadad;border-radius:3px;background:linear-gradient(#fdfdfd,#eeeeee);border-color:#cfcfcf;background:linear-gradient(#fbfbfb,#f2f2f2)"></div>
<div class="t" style="left:1168.0px;width:600px;text-align:center;top:1162.00px;font-size:16.9px;"></div>
<div class="t" style="left:1444.12px;top:1162.00px;font-size:17px;transform-origin:0 0;transform:scaleX(0.8824);color:#838383">Cancel</div>
<div class="a" style="left:1px;top:1199px;width:1522px;height:30px;background:#efefef;border-bottom:1px solid #fff"></div>
<div class="a" style="left:1520px;top:1217px;width:1px;height:1px;background:#8a8a8a"></div>
<div class="a" style="left:1517px;top:1220px;width:1px;height:1px;background:#8a8a8a"></div>
<div class="a" style="left:1520px;top:1220px;width:1px;height:1px;background:#8a8a8a"></div>
<div class="a" style="left:1514px;top:1223px;width:1px;height:1px;background:#8a8a8a"></div>
<div class="a" style="left:1517px;top:1223px;width:1px;height:1px;background:#8a8a8a"></div>
<div class="a" style="left:1520px;top:1223px;width:1px;height:1px;background:#8a8a8a"></div>
<div class="a" style="left:1511px;top:1226px;width:1px;height:1px;background:#8a8a8a"></div>
<div class="a" style="left:1514px;top:1226px;width:1px;height:1px;background:#8a8a8a"></div>
<div class="a" style="left:1517px;top:1226px;width:1px;height:1px;background:#8a8a8a"></div>
<div class="a" style="left:1520px;top:1226px;width:1px;height:1px;background:#8a8a8a"></div>
<div class="a" style="left:0px;top:0px;width:1524px;height:1230px;border:1px solid #262626;background:transparent"></div>
</body></html>
